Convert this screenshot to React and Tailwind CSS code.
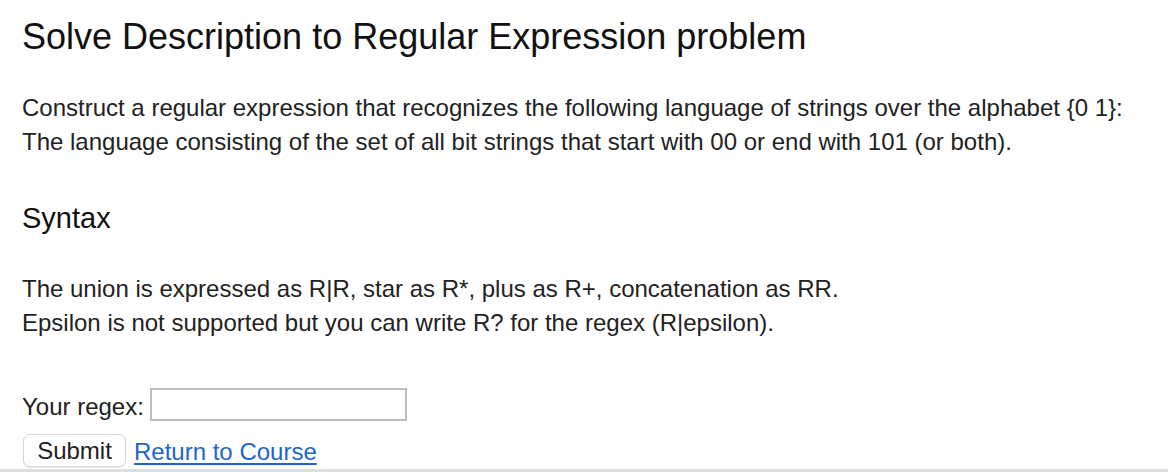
export default function App() {
  return (
    <div className="w-[1168px] h-[472px] overflow-hidden bg-white flex flex-col font-['Liberation_Sans',Arial,sans-serif] text-[#222]">
      <div className="px-[22px] flex flex-col">
        <h1 className="mt-[15px] text-[36px] leading-[43px] text-[#111] font-normal">
          Solve Description to Regular Expression problem
        </h1>
        <p className="mt-[33px] text-[24px] leading-[34px]">
          Construct a regular expression that recognizes the following language of strings over the alphabet {"{0 1}"}:
          <br />
          The language consisting of the set of all bit strings that start with 00 or end with 101 (or both).
        </p>
        <h2 className="mt-[42px] text-[29px] leading-[34px] text-[#111] font-normal">Syntax</h2>
        <p className="mt-[37px] text-[24px] leading-[34px]">
          The union is expressed as R|R, star as R*, plus as R+, concatenation as RR.
          <br />
          Epsilon is not supported but you can write R? for the regex (R|epsilon).
        </p>
        <div className="mt-[48px] flex items-start gap-[6px] h-[33px]">
          <label className="mt-[2px] text-[24px] leading-[34px]">Your regex:</label>
          <input
            type="text"
            className="w-[257px] h-[33px] border-2 border-[#bdbdbd] bg-white outline-none px-1 text-[20px]"
          />
        </div>
        <div className="mt-[13px] flex items-start gap-[8px]">
          <button className="ml-[1px] h-[33px] w-[103px] border border-[#d6d6d6] rounded-[7px] bg-white text-[24px] leading-[31px] text-[#222] shadow-[0_1px_1px_rgba(0,0,0,0.08)]">
            Submit
          </button>
          <a href="#" className="mt-[1px] text-[24px] leading-[34px] text-[#2066c8] underline underline-offset-[3px] decoration-[2px]">
            Return to Course
          </a>
        </div>
      </div>
      <div className="mt-auto h-[3px] w-full bg-[#dedede]" />
    </div>
  );
}
